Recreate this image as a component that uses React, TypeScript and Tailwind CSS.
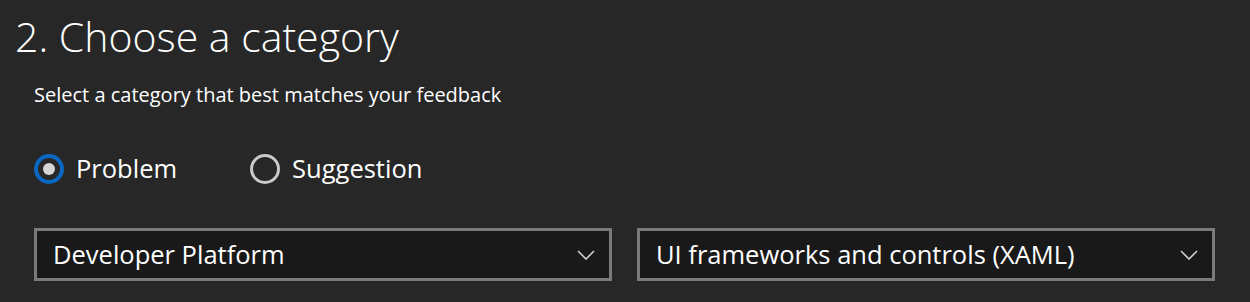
import { useState } from "react";

const font = { fontFamily: '"Open Sans", "Noto Sans", sans-serif' };

function Radio({ checked, label, onClick }: { checked: boolean; label: string; onClick: () => void }) {
  return (
    <button type="button" onClick={onClick} className="flex items-center gap-[12px] text-[25.5px] text-white">
      <span
        className={
          "flex h-[30px] w-[30px] items-center justify-center rounded-full border-[3px] " +
          (checked ? "border-[#0a68c2] border-[4px]" : "border-[#c9c9c9]")
        }
      >
        {checked && <span className="h-[12px] w-[12px] rounded-full bg-[#d6d6d6]" />}
      </span>
      <span className="leading-none">{label}</span>
    </button>
  );
}

function Dropdown({ value }: { value: string }) {
  return (
    <div className="flex h-[53px] flex-1 items-center justify-between border-[3px] border-[#7a7a7a] bg-[#191919] pl-[16px] pr-[14px]">
      <span className="text-[25.5px] leading-none text-white">{value}</span>
      <svg width="18" height="10" viewBox="0 0 18 10" fill="none">
        <path d="M1 1 L9 9 L17 1" stroke="#cfcfcf" strokeWidth="1.6" />
      </svg>
    </div>
  );
}

export default function App() {
  const [kind, setKind] = useState<"problem" | "suggestion">("problem");

  return (
    <div className="h-[302px] w-[1250px] bg-[#272727] text-white" style={font}>
      <h1 className="pl-[15px] pt-[8px] text-[41px] font-light leading-[56px]">2. Choose a category</h1>
      <div className="pl-[34px] pr-[35px]">
        <p className="mt-[18px] text-[20px] leading-[26px]">Select a category that best matches your feedback</p>
        <div className="mt-[46px] flex gap-[73px]">
          <Radio checked={kind === "problem"} label="Problem" onClick={() => setKind("problem")} />
          <Radio checked={kind === "suggestion"} label="Suggestion" onClick={() => setKind("suggestion")} />
        </div>
        <div className="mt-[44px] flex gap-[25px]">
          <Dropdown value="Developer Platform" />
          <Dropdown value="UI frameworks and controls (XAML)" />
        </div>
      </div>
    </div>
  );
}
